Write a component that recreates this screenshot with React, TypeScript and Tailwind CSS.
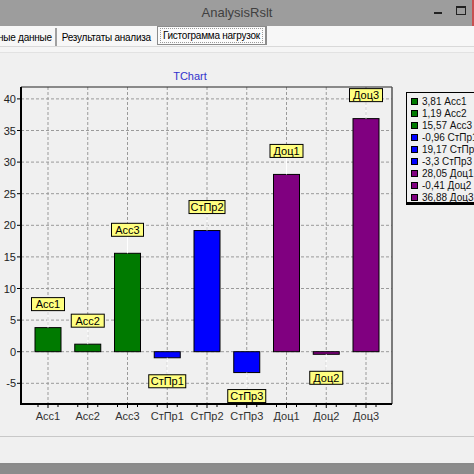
import React from 'react';

const bars = [
  { name: 'Асс1', v: 3.81, color: '#007a00', lw: 33, legend: '3,81 Асс1' },
  { name: 'Асс2', v: 1.19, color: '#007a00', lw: 33, legend: '1,19 Асс2' },
  { name: 'Асс3', v: 15.57, color: '#007a00', lw: 32, legend: '15,57 Асс3' },
  { name: 'СтПр1', v: -0.96, color: '#0000ff', lw: 37, legend: '-0,96 СтПр1' },
  { name: 'СтПр2', v: 19.17, color: '#0000ff', lw: 36, legend: '19,17 СтПр2' },
  { name: 'СтПр3', v: -3.3, color: '#0000ff', lw: 38, legend: '-3,3 СтПр3' },
  { name: 'Доц1', v: 28.05, color: '#800080', lw: 33, legend: '28,05 Доц1' },
  { name: 'Доц2', v: -0.41, color: '#800080', lw: 33, legend: '-0,41 Доц2' },
  { name: 'Доц3', v: 36.88, color: '#800080', lw: 33, legend: '36,88 Доц3' },
];

const FONT = '"Liberation Sans", Arial, sans-serif';
const X0 = 21;
const X1 = 392;
const YT = 87;
const YB = 404;
const y = (v: number) => 351.7 - 6.32 * v;
const cx = (i: number) => 48 + 39.75 * i;
const ticks = [-5, 0, 5, 10, 15, 20, 25, 30, 35, 40];

const Chart = () => (
  <svg width={400} height={383} viewBox="0 53 400 383" className="shrink-0" style={{ fontFamily: FONT }}>
    <text x={190} y={80} fontSize={11} fill="#3333cc" textAnchor="middle">TChart</text>

    {/* grid */}
    {ticks.map((t) => (
      <line key={'h' + t} x1={X0} x2={X1} y1={y(t)} y2={y(t)} stroke="#9a9a9a" strokeDasharray="3 2" />
    ))}
    {bars.map((_, i) => (
      <line key={'v' + i} x1={cx(i)} x2={cx(i)} y1={YT} y2={YB} stroke="#9a9a9a" strokeDasharray="3 2" />
    ))}

    {/* frame */}
    <line x1={X0} x2={X1} y1={YT} y2={YT} stroke="#222" strokeWidth={1} />
    <line x1={X1} x2={X1} y1={YT} y2={YB} stroke="#555" strokeWidth={1.5} />
    <line x1={X0} x2={X0} y1={YT} y2={YB + 1} stroke="#000" strokeWidth={2} />
    <line x1={X0} x2={X1} y1={YB} y2={YB} stroke="#000" strokeWidth={2} />

    {/* y ticks + labels */}
    {ticks.map((t) => (
      <g key={'yt' + t}>
        <line x1={17} x2={X0} y1={y(t)} y2={y(t)} stroke="#000" />
        <text x={16} y={y(t) + 4} fontSize={11} fill="#222" textAnchor="end">{t}</text>
      </g>
    ))}

    {/* x ticks + labels */}
    {bars.map((b, i) => (
      <g key={'xt' + i}>
        <line x1={cx(i)} x2={cx(i)} y1={YB} y2={YB + 4} stroke="#000" />
        <line x1={cx(i) - 10} x2={cx(i) - 10} y1={YB} y2={YB + 3} stroke="#000" />
        <line x1={cx(i) + 10} x2={cx(i) + 10} y1={YB} y2={YB + 3} stroke="#000" />
        <text x={cx(i)} y={420} fontSize={11} fill="#333" textAnchor="middle">{b.name}</text>
      </g>
    ))}

    {/* bars */}
    {bars.map((b, i) => {
      const top = Math.min(y(b.v), y(0));
      const h = Math.max(Math.abs(y(b.v) - y(0)), 1);
      const pos = b.v >= 0;
      const end = y(b.v);
      const ly = pos ? end - 17 - 13 : end + 17;
      return (
        <g key={'b' + i}>
          <rect x={cx(i) - 13} y={top} width={26} height={h} fill={b.color} stroke="#000" strokeWidth={1} />
          <line x1={cx(i)} x2={cx(i)} y1={pos ? ly + 13 : end} y2={pos ? end : ly} stroke="#fff" />
          <rect x={cx(i) - b.lw / 2} y={ly} width={b.lw} height={13} fill="#ffff80" stroke="#000" strokeWidth={1} />
          <text x={cx(i)} y={ly + 10.5} fontSize={11} fill="#000" textAnchor="middle">{b.name}</text>
        </g>
      );
    })}
  </svg>
);

export default function App() {
  return (
    <div className="w-[474px] h-[474px] overflow-hidden bg-[#f0f0f0] flex flex-col" style={{ fontFamily: FONT }}>
      {/* title bar */}
      <div className="h-[26px] bg-[#9d9d9d] relative flex items-center justify-center shrink-0">
        <span className="text-[13px] text-[#404040]">AnalysisRslt</span>
        <div className="absolute left-[434px] top-[12px] w-[8px] h-[2px] bg-[#222]" />
        <div className="absolute left-[456px] top-[6px] w-[10px] h-[9px] border border-[#222] border-t-2" />
        <div className="absolute left-[472px] top-0 w-[2px] h-[26px] bg-[#c85050]" />
      </div>

      {/* tabs */}
      <div className="h-[21px] bg-[#f7f7f7] border-b border-[#d9d9d9] flex items-end text-[10px] tracking-[-0.25px] text-black shrink-0">
        <div className="flex items-center h-[18px] pr-[3px] border-r-2 border-[#a0a0a0] ml-[-2px]">ные данные</div>
        <div className="flex items-center h-[18px] px-[5px]">Результаты анализа</div>
        <div className="flex items-center h-[19px] px-[2px] ml-[1px] border border-[#8c8c8c] border-r-2 bg-[#fbfbfb] mb-[1px]">
          <span className="border border-dotted border-[#999] px-[2px] leading-[13px]">Гистограмма нагрузок</span>
        </div>
      </div>
      <div className="h-[6px] bg-[#f5f5f5] border-b border-[#e2e2e2] shrink-0" />

      {/* chart panel */}
      <div className="h-[383px] flex shrink-0">
        <Chart />
        <div className="mt-[39px] ml-[6px] w-[84px] h-[113px] shrink-0 border border-black border-b-[3px] border-r-2 bg-[#f0f0f0] pt-[2px] pl-[4px]">
          {bars.map((b) => (
            <div key={b.legend} className="flex items-center h-[12px] text-[10px] text-[#111] whitespace-nowrap">
              <span className="w-[7px] h-[7px] border border-black mr-[4px] shrink-0" style={{ background: b.color }} />
              {b.legend}
            </div>
          ))}
        </div>
      </div>

      {/* status area */}
      <div className="border-t border-[#c8c8c8] h-[27px] bg-[#f0f0f0] shrink-0" />
      <div className="border-t-2 border-[#8a8a8a] h-[1px] bg-white shrink-0" />
      <div className="flex-1 bg-[#8c8c8c]" />
    </div>
  );
}
